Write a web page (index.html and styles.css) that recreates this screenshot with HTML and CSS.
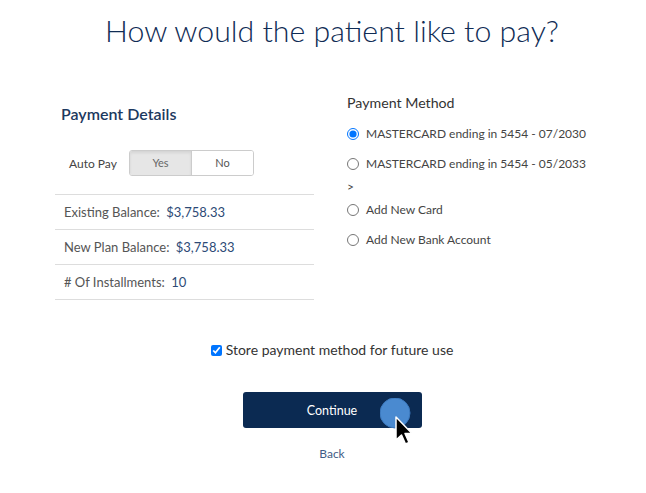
FILE: index.html
```html
<!DOCTYPE html>
<html lang="en">
<head>
  <meta charset="UTF-8" />
  <meta name="viewport" content="width=device-width, initial-scale=1" />
  <title>Payment</title>
  <link rel="stylesheet" href="styles.css">
</head>
<body>

  <div class="page">
    <h1>How would the patient like to pay?</h1>

    <div class="columns">
      <!-- left: details -->
      <div class="details">
        <h3>Payment Details</h3>

        <div class="autopay">
          <span class="autopay-label">Auto Pay</span>
          <div class="toggle">
            <span class="toggle-opt active">Yes</span>
            <span class="toggle-opt">No</span>
          </div>
        </div>

        <div class="info-row">Existing Balance: <span class="value">$3,758.33</span></div>
        <div class="info-row">New Plan Balance: <span class="value">$3,758.33</span></div>
        <div class="info-row">&#35; Of Installments: <span class="value">10</span></div>
      </div>

      <!-- right: methods -->
      <div class="methods">
        <h4>Payment Method</h4>

        <label class="method"><input type="radio" name="method" checked> MASTERCARD ending in 5454 - 07/2030</label>
        <div class="method-wrap">
          <label class="method"><input type="radio" name="method"> MASTERCARD ending in 5454 - 05/2033</label>
          <div class="stray">&gt;</div>
        </div>
        <label class="method"><input type="radio" name="method"> Add New Card</label>
        <label class="method"><input type="radio" name="method"> Add New Bank Account</label>
      </div>
    </div>

    <label class="store"><input type="checkbox" checked> Store payment method for future use</label>

    <div class="actions">
      <div class="btn-wrap">
        <button class="continue">Continue</button>
        <svg class="cursor" width="44" height="50" viewBox="0 0 44 50">
          <circle cx="15" cy="15" r="15" fill="#4a8ad0" stroke="#3b78bd" stroke-width="1"/>
          <path d="M16 19 L16 42 L21.5 37 L25.5 46 L29 44.5 L25 35.5 L32 35.5 Z" fill="#000" stroke="#fff" stroke-width="1.5" stroke-linejoin="round"/>
        </svg>
      </div>
      <a class="back" href="#">Back</a>
    </div>
  </div>

</body>
</html>
```

FILE: styles.css
```css
body {
  margin: 0;
  font-family: Lato, "Open Sans", sans-serif;
  background: #fff;
  color: #444;
}

.page {
  width: 646px;
  box-sizing: border-box;
  padding-left: 18px;
}

h1 {
  margin: 12px 0 0;
  font-size: 30.3px;
  line-height: 36px;
  font-weight: 300;
  text-align: center;
  color: #0f2c55;
}

.columns {
  display: flex;
  margin-top: 44px;
  padding-left: 37px;
}

.details {
  width: 259px;
}

.details h3 {
  margin: 11px 0 0 6px;
  font-size: 16px;
  line-height: 22px;
  font-weight: 600;
  color: #1c3960;
}

.autopay {
  display: flex;
  align-items: center;
  margin-top: 25px;
  margin-bottom: 18px;
  padding-left: 14px;
}

.autopay-label {
  font-size: 12px;
  color: #444;
  width: 60px;
}

.toggle {
  display: flex;
  border: 1px solid #ccc;
  border-radius: 3px;
  overflow: hidden;
  height: 24px;
}

.toggle-opt {
  width: 61px;
  font-size: 11px;
  line-height: 24px;
  text-align: center;
  color: #555;
  background: #fff;
}

.toggle-opt.active {
  background: #e6e6e6;
  border-right: 1px solid #ccc;
  box-shadow: inset 0 2px 3px rgb(0 0 0 / 0.08);
  color: #666;
}

.info-row {
  border-top: 1px solid #ddd;
  height: 34px;
  line-height: 34px;
  padding-left: 9px;
  font-size: 13px;
  color: #555;
}

.info-row:last-child {
  border-bottom: 1px solid #ddd;
}

.value {
  color: #2d4a76;
  margin-left: 3px;
}

.methods {
  margin-left: 33px;
}

.methods h4 {
  margin: 0;
  font-size: 14.2px;
  line-height: 22px;
  font-weight: 400;
  color: #333;
}

.method {
  display: flex;
  align-items: center;
  margin-top: 10px;
  line-height: 20px;
  font-size: 12px;
  color: #444;
}

.method input {
  margin: 0 7px 0 0;
  width: 12px;
  height: 12px;
}

.method-wrap .stray {
  padding-top: 3px;
  font-size: 12px;
  line-height: 20px;
  color: #444;
}

.method-wrap + .method {
  margin-top: 3px;
}

.store {
  display: flex;
  align-items: center;
  justify-content: center;
  margin-top: 40px;
  font-size: 14px;
  line-height: 20px;
  color: #333;
}

.store input {
  margin: 0 4px 0 0;
  width: 11px;
  height: 11px;
}

.actions {
  display: flex;
  flex-direction: column;
  align-items: center;
  margin-top: 32px;
}

.btn-wrap {
  position: relative;
}

.continue {
  width: 179px;
  height: 36px;
  border: none;
  border-radius: 3px;
  background: #0b2a52;
  color: #fff;
  font-family: Lato, sans-serif;
  font-size: 12.5px;
  cursor: pointer;
}

.cursor {
  position: absolute;
  left: 137px;
  top: 6px;
  pointer-events: none;
}

.back {
  margin-top: 18px;
  font-size: 12px;
  color: #3f5c86;
  text-decoration: none;
}
```
